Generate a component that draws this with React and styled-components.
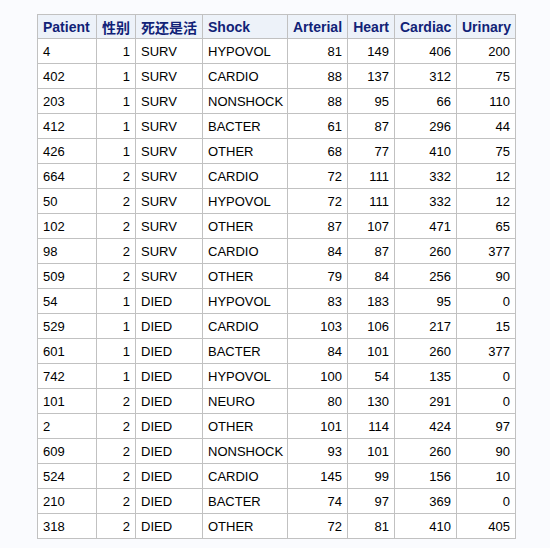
import React from 'react';
import styled, { createGlobalStyle } from 'styled-components';

const GlobalStyle = createGlobalStyle`
  html, body {
    margin: 0;
    padding: 0;
    background: #fafbfe;
  }
`;

const Page = styled.div`
  padding: 14px 0 0 37px;
  font-family: "Liberation Sans", Arial, "Noto Sans CJK SC", sans-serif;
  font-size: 13px;
`;

const Table = styled.table`
  border-collapse: collapse;
  table-layout: fixed;
  width: 479px;
  border: 1px solid #c1c1c1;
`;

const HeadCell = styled.th`
  height: 23px;
  padding: 0 5px;
  background: #edf2f9;
  color: #112277;
  font-size: 14px;
  font-weight: bold;
  text-align: ${(p) => (p.$num ? 'right' : 'left')};
  border: 1px solid #c1c1c1;
  white-space: nowrap;
  overflow: hidden;
`;

const Cell = styled.td`
  height: 24px;
  padding: 0 5px;
  background: #ffffff;
  color: #000000;
  text-align: ${(p) => (p.$num ? 'right' : 'left')};
  border: 1px solid #c1c1c1;
  white-space: nowrap;
`;

const columns = [
  { label: 'Patient', width: 59 },
  { label: '性别', width: 39, num: true },
  { label: '死还是活', width: 67 },
  { label: 'Shock', width: 85 },
  { label: 'Arterial', width: 60, num: true },
  { label: 'Heart', width: 47, num: true },
  { label: 'Cardiac', width: 62, num: true },
  { label: 'Urinary', width: 59, num: true },
];

const rows = [
  [4, 1, 'SURV', 'HYPOVOL', 81, 149, 406, 200],
  [402, 1, 'SURV', 'CARDIO', 88, 137, 312, 75],
  [203, 1, 'SURV', 'NONSHOCK', 88, 95, 66, 110],
  [412, 1, 'SURV', 'BACTER', 61, 87, 296, 44],
  [426, 1, 'SURV', 'OTHER', 68, 77, 410, 75],
  [664, 2, 'SURV', 'CARDIO', 72, 111, 332, 12],
  [50, 2, 'SURV', 'HYPOVOL', 72, 111, 332, 12],
  [102, 2, 'SURV', 'OTHER', 87, 107, 471, 65],
  [98, 2, 'SURV', 'CARDIO', 84, 87, 260, 377],
  [509, 2, 'SURV', 'OTHER', 79, 84, 256, 90],
  [54, 1, 'DIED', 'HYPOVOL', 83, 183, 95, 0],
  [529, 1, 'DIED', 'CARDIO', 103, 106, 217, 15],
  [601, 1, 'DIED', 'BACTER', 84, 101, 260, 377],
  [742, 1, 'DIED', 'HYPOVOL', 100, 54, 135, 0],
  [101, 2, 'DIED', 'NEURO', 80, 130, 291, 0],
  [2, 2, 'DIED', 'OTHER', 101, 114, 424, 97],
  [609, 2, 'DIED', 'NONSHOCK', 93, 101, 260, 90],
  [524, 2, 'DIED', 'CARDIO', 145, 99, 156, 10],
  [210, 2, 'DIED', 'BACTER', 74, 97, 369, 0],
  [318, 2, 'DIED', 'OTHER', 72, 81, 410, 405],
];

export default function App() {
  return (
    <Page>
      <GlobalStyle />
      <Table>
        <colgroup>
          {columns.map((c) => (
            <col key={c.label} style={{ width: c.width }} />
          ))}
        </colgroup>
        <thead>
          <tr>
            {columns.map((c) => (
              <HeadCell key={c.label} $num={c.num}>{c.label}</HeadCell>
            ))}
          </tr>
        </thead>
        <tbody>
          {rows.map((r, i) => (
            <tr key={i}>
              {r.map((v, j) => (
                <Cell key={j} $num={j === 0 ? false : columns[j].num}>{v}</Cell>
              ))}
            </tr>
          ))}
        </tbody>
      </Table>
    </Page>
  );
}
